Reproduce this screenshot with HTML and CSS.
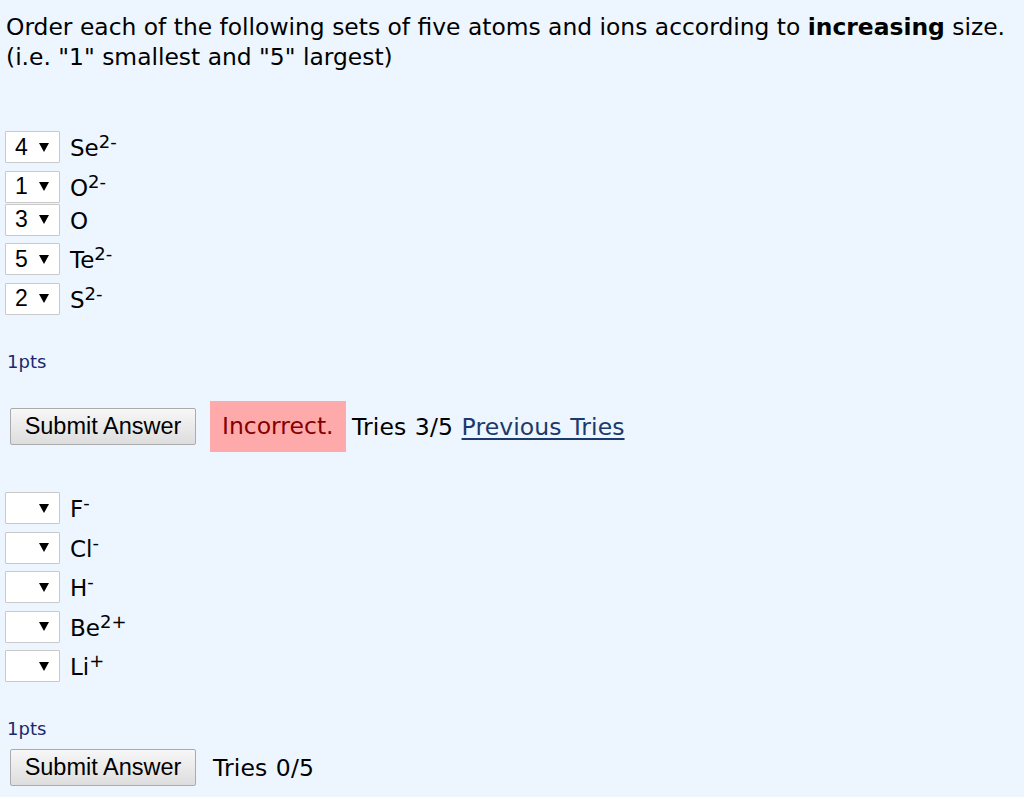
FILE: index.html
```html
<!DOCTYPE html>
<html>
<head>
<meta charset="utf-8">
<link rel="stylesheet" href="styles.css">
</head>
<body>
<div class="page">
  <p class="prompt">Order each of the following sets of five atoms and ions according to <b>increasing</b> size.<br>(i.e. "1" smallest and "5" largest)</p>

  <div class="set set-first">
    <div class="row"><div class="pick"><span class="val">4</span><svg class="arrow" width="10" height="9" viewBox="0 0 10 9"><polygon points="0,0 10,0 5,9" fill="#000"/></svg></div><span class="label">Se<sup>2-</sup></span></div>
    <div class="row"><div class="pick"><span class="val">1</span><svg class="arrow" width="10" height="9" viewBox="0 0 10 9"><polygon points="0,0 10,0 5,9" fill="#000"/></svg></div><span class="label">O<sup>2-</sup></span></div>
    <div class="row plain"><div class="pick"><span class="val">3</span><svg class="arrow" width="10" height="9" viewBox="0 0 10 9"><polygon points="0,0 10,0 5,9" fill="#000"/></svg></div><span class="label">O</span></div>
    <div class="row"><div class="pick"><span class="val">5</span><svg class="arrow" width="10" height="9" viewBox="0 0 10 9"><polygon points="0,0 10,0 5,9" fill="#000"/></svg></div><span class="label">Te<sup>2-</sup></span></div>
    <div class="row"><div class="pick"><span class="val">2</span><svg class="arrow" width="10" height="9" viewBox="0 0 10 9"><polygon points="0,0 10,0 5,9" fill="#000"/></svg></div><span class="label">S<sup>2-</sup></span></div>
  </div>
  <div class="pts">1pts</div>
  <div class="actions actions-first">
    <button class="submit">Submit Answer</button>
    <span class="incorrect">Incorrect.</span>
    <span class="tries">Tries 3/5 <a class="prev" href="#">Previous Tries</a></span>
  </div>

  <div class="set set-second">
    <div class="row"><div class="pick"><span class="val"></span><svg class="arrow" width="10" height="9" viewBox="0 0 10 9"><polygon points="0,0 10,0 5,9" fill="#000"/></svg></div><span class="label">F<sup>-</sup></span></div>
    <div class="row"><div class="pick"><span class="val"></span><svg class="arrow" width="10" height="9" viewBox="0 0 10 9"><polygon points="0,0 10,0 5,9" fill="#000"/></svg></div><span class="label">Cl<sup>-</sup></span></div>
    <div class="row"><div class="pick"><span class="val"></span><svg class="arrow" width="10" height="9" viewBox="0 0 10 9"><polygon points="0,0 10,0 5,9" fill="#000"/></svg></div><span class="label">H<sup>-</sup></span></div>
    <div class="row"><div class="pick"><span class="val"></span><svg class="arrow" width="10" height="9" viewBox="0 0 10 9"><polygon points="0,0 10,0 5,9" fill="#000"/></svg></div><span class="label">Be<sup>2+</sup></span></div>
    <div class="row"><div class="pick"><span class="val"></span><svg class="arrow" width="10" height="9" viewBox="0 0 10 9"><polygon points="0,0 10,0 5,9" fill="#000"/></svg></div><span class="label">Li<sup>+</sup></span></div>
  </div>
  <div class="pts">1pts</div>
  <div class="actions actions-last">
    <button class="submit">Submit Answer</button>
    <span class="tries tries-last">Tries 0/5</span>
  </div>
</div>
</body>
</html>
```

FILE: styles.css
```css
html, body {
  margin: 0;
  padding: 0;
  background: #edf5fe;
}
body {
  font-family: "DejaVu Sans", Verdana, sans-serif;
  color: #000;
}
.page {
  padding: 12px 0 0 0;
}
.prompt {
  margin: 0 0 0 6px;
  font-size: 23.4px;
  line-height: 30px;
}
.set {
  display: flex;
  flex-direction: column;
  margin-left: 5px;
}
.set-first {
  margin-top: 51.5px;
}
.set-second {
  margin-top: 32.5px;
}
.row {
  display: flex;
  align-items: center;
  gap: 10px;
  height: 32px;
  margin-top: 7.5px;
}
.row.plain {
  margin-top: 1px;
}
.pick {
  box-sizing: border-box;
  width: 55px;
  height: 32px;
  background: #fff;
  border: 1px solid #c9c9c9;
  border-radius: 1px;
  display: flex;
  align-items: center;
  padding-left: 9px;
  font-family: "Liberation Sans", Arial, sans-serif;
  font-size: 23px;
}
.val {
  width: 24px;
}
.arrow {
  display: block;
}
.label {
  font-size: 23px;
  line-height: 32px;
  position: relative;
  top: 1px;
}
.label sup {
  font-size: 18px;
  line-height: 0;
  vertical-align: 8px;
}
.pts {
  margin: 36px 0 0 7px;
  font-size: 18px;
  line-height: 22px;
  color: #1a2870;
}
.actions {
  display: flex;
  align-items: center;
  margin-left: 10px;
}
.actions-first {
  margin-top: 28.5px;
}
.actions-last {
  margin-top: 9px;
}
.submit {
  box-sizing: border-box;
  width: 186px;
  height: 37px;
  padding: 0;
  margin: 0;
  border: 1px solid #ababab;
  border-radius: 2px;
  background: linear-gradient(#f7f7f7, #dddddd);
  font-family: "Liberation Sans", Arial, sans-serif;
  font-size: 23.5px;
  color: #000;
}
.incorrect {
  box-sizing: border-box;
  height: 51px;
  width: 136px;
  margin-left: 14px;
  padding-left: 12px;
  background: #ffaaaa;
  color: #850000;
  font-size: 23.5px;
  line-height: 51px;
}
.tries {
  margin-left: 6px;
  font-size: 23.5px;
  word-spacing: 1px;
  letter-spacing: 0.1px;
}
.tries-last {
  margin-left: 17px;
}
.prev {
  color: #1a3a6c;
  text-decoration: underline;
  text-underline-offset: 3px;
}
```
